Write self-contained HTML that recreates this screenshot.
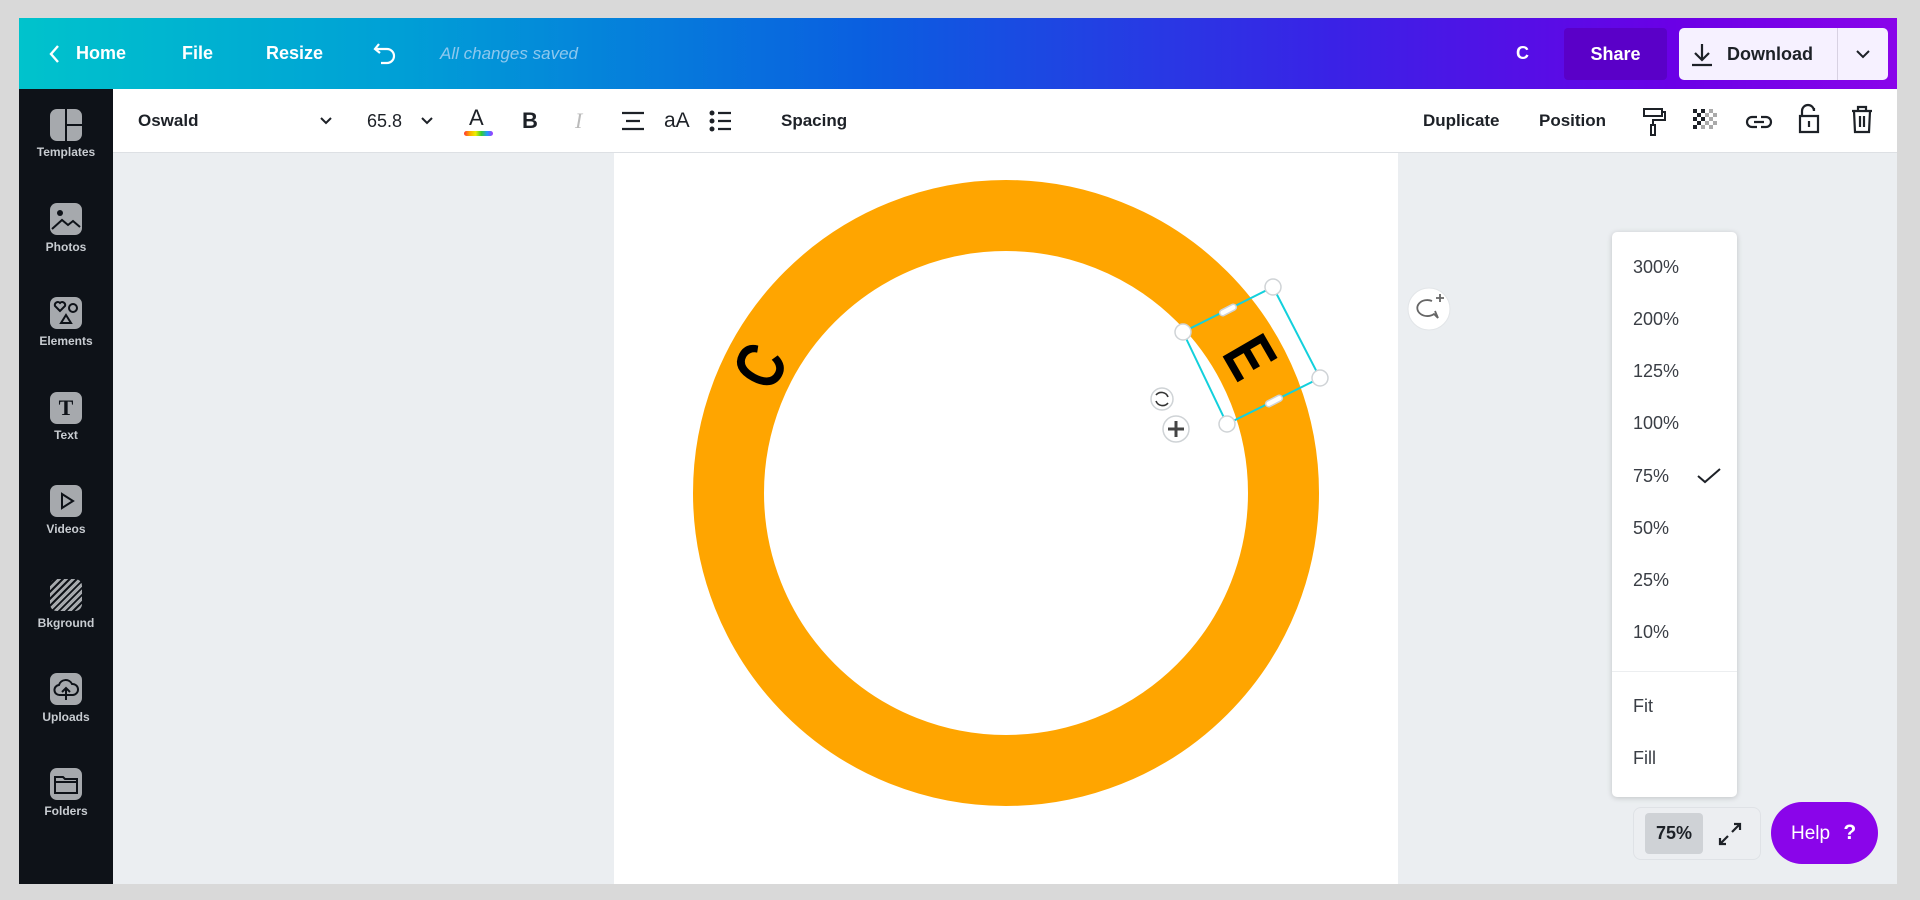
<!DOCTYPE html>
<html><head><meta charset="utf-8"><style>
*{margin:0;padding:0;box-sizing:border-box}
body{width:1920px;height:900px;background:#d9d9d9;position:relative;overflow:hidden;font-family:"Liberation Sans",sans-serif}
.abs{position:absolute}
#top{left:19px;top:18px;width:1878px;height:71px;background:linear-gradient(90deg,#00c3cc 0%,#00a0d6 20%,#0a5fe0 45%,#3a22e6 70%,#6a00e6 88%,#8a05ea 100%)}
.tt{position:absolute;top:0;line-height:71px;color:#fff;font-size:18px;font-weight:bold}
#side{left:19px;top:89px;width:94px;height:795px;background:#0e1218}
.si{position:absolute;left:0;width:94px;text-align:center;color:#c8ccd1;font-size:12px;font-weight:bold}
.ic{position:absolute;left:31px;width:32px;height:32px;background:#a6a9ad;border-radius:7px}
.sv{position:absolute;left:31px}
#tb{left:113px;top:89px;width:1784px;height:64px;background:#fff;border-bottom:1px solid #dde0e4}
.tl{position:absolute;top:0;line-height:64px;font-size:18px;color:#1d2127;font-weight:bold}
#cv{left:113px;top:153px;width:1784px;height:731px;background:#ebeef1}
#page{left:614px;top:153px;width:784px;height:731px;background:#fff}
#menu{left:1612px;top:232px;width:125px;height:565px;background:#fff;border-radius:5px;box-shadow:0 1px 6px rgba(0,0,0,.18)}
.mi{position:absolute;left:21px;font-size:18px;color:#3a3e45}
</style></head><body>
<div id="top" class="abs">
 <svg class="abs" style="left:29px;top:26px" width="14" height="20" viewBox="0 0 14 20"><path d="M10 2 L3 10 L10 18" stroke="#fff" stroke-width="2.4" fill="none"/></svg>
 <div class="tt" style="left:57px">Home</div>
 <div class="tt" style="left:163px">File</div>
 <div class="tt" style="left:247px">Resize</div>
 <svg class="abs" style="left:353px;top:22px" width="28" height="26" viewBox="0 0 28 26"><path d="M7 4 L3 9 L8 13 M3 9 H15 A7 7 0 0 1 15 23 H9" stroke="#fff" stroke-width="2.2" fill="none"/></svg>
 <div class="tt" style="left:421px;font-weight:normal;font-style:italic;color:#8ec8ee;font-size:17px">All changes saved</div>
 <div class="tt" style="left:1497px">C</div>
 <div class="abs" style="left:1545px;top:10px;width:103px;height:52px;background:#5a00c8;border-radius:4px;color:#fff;font-size:18px;font-weight:bold;text-align:center;line-height:52px">Share</div>
 <div class="abs" style="left:1660px;top:10px;width:209px;height:52px;background:#f6f1ff;border-radius:5px">
  <svg class="abs" style="left:10px;top:14px" width="26" height="26" viewBox="0 0 26 26"><path d="M13 2 V17 M6 11 L13 18 L20 11 M3 23 H23" stroke="#1d2127" stroke-width="2.2" fill="none"/></svg>
  <div class="abs" style="left:48px;top:0;line-height:52px;font-size:18px;font-weight:bold;color:#1d2127">Download</div>
  <div class="abs" style="left:158px;top:0;width:1px;height:52px;background:#d8d2e2"></div>
  <svg class="abs" style="left:176px;top:20px" width="16" height="12" viewBox="0 0 16 12"><path d="M2 3 L8 9 L14 3" stroke="#1d2127" stroke-width="2" fill="none"/></svg>
 </div>
</div>
<div id="side" class="abs">
 <div class="ic" style="top:20px"></div><div class="abs" style="left:46px;top:20px;width:2px;height:32px;background:#0e1218"></div><div class="abs" style="left:47px;top:35px;width:16px;height:2px;background:#0e1218"></div>
 <div class="si" style="top:56px">Templates</div>
 <div class="ic" style="top:114px"></div><svg class="sv" style="top:114px" width="32" height="32"><circle cx="10" cy="10" r="3" fill="#0e1218"/><path d="M2 26L12 17L18 22L23 18L30 24" stroke="#0e1218" stroke-width="2" fill="none"/></svg><div class="si" style="top:151px">Photos</div>
 <div class="ic" style="top:208px"></div><svg class="sv" style="top:208px" width="32" height="32" fill="none" stroke="#0e1218" stroke-width="2"><path d="M10 14L5 9A3 3 0 0 1 10 6A3 3 0 0 1 15 9Z"/><circle cx="23" cy="11" r="4"/><path d="M16 18L21 26H11Z"/></svg><div class="si" style="top:245px">Elements</div>
 <div class="ic" style="top:303px"></div><div class="abs" style="left:37px;top:308px;width:20px;height:22px;color:#0e1218;font:bold 22px 'Liberation Serif',serif;text-align:center;line-height:22px">T</div><div class="si" style="top:339px">Text</div>
 <div class="ic" style="top:396px"></div><svg class="abs" style="left:38px;top:402px" width="20" height="20"><path d="M5 3 L16 10 L5 17Z" stroke="#0e1218" stroke-width="2" fill="none"/></svg><div class="si" style="top:433px">Videos</div>
 <div class="ic" style="top:490px;background:repeating-linear-gradient(135deg,#a6a9ad 0 3px,#0e1218 3px 5px)"></div><div class="si" style="top:527px">Bkground</div>
 <div class="ic" style="top:584px"></div><svg class="sv" style="top:584px" width="32" height="32" fill="none" stroke="#0e1218" stroke-width="2"><path d="M10 22A5 5 0 0 1 9 12A7 7 0 0 1 22 11A5 5 0 0 1 23 22Z M16 27V15M12 19L16 15L20 19"/></svg><div class="si" style="top:621px">Uploads</div>
 <div class="ic" style="top:679px"></div><svg class="sv" style="top:679px" width="32" height="32" fill="none" stroke="#0e1218" stroke-width="2"><path d="M5 9H13L15 11H27V25H5Z M5 14H27"/></svg><div class="si" style="top:715px">Folders</div>
</div>
<div id="tb" class="abs">
 <div class="tl" style="left:25px;font-size:17px">Oswald</div>
 <svg class="abs" style="left:206px;top:27px" width="14" height="10"><path d="M2 2 L7 7 L12 2" stroke="#1d2127" stroke-width="2" fill="none"/></svg>
 <div class="tl" style="left:254px;font-weight:normal">65.8</div>
 <svg class="abs" style="left:307px;top:27px" width="14" height="10"><path d="M2 2 L7 7 L12 2" stroke="#1d2127" stroke-width="2" fill="none"/></svg>
 <div class="tl" style="left:356px;font-weight:normal;font-size:22px;line-height:58px">A</div>
 <div class="abs" style="left:351px;top:42px;width:29px;height:5px;border-radius:3px;background:linear-gradient(90deg,#f33,#fa0,#ee0,#3c3,#29f,#a3f)"></div>
 <div class="tl" style="left:409px;font-size:22px">B</div>
 <div class="tl" style="left:462px;font-size:22px;font-weight:normal;font-style:italic;color:#bbb;font-family:'Liberation Serif',serif">I</div>
 <svg class="abs" style="left:508px;top:21px" width="24" height="22"><path d="M1 3H23M5 11H19M1 19H23" stroke="#1d2127" stroke-width="2.2"/></svg>
 <div class="tl" style="left:551px;font-weight:normal;font-size:21px">aA</div>
 <svg class="abs" style="left:596px;top:20px" width="24" height="24"><circle cx="3" cy="4" r="2.5" fill="#1d2127"/><circle cx="3" cy="12" r="2.5" fill="#1d2127"/><circle cx="3" cy="20" r="2.5" fill="#1d2127"/><path d="M9 4H22M9 12H22M9 20H22" stroke="#1d2127" stroke-width="2.2"/></svg>
 <div class="tl" style="left:668px;font-size:17px">Spacing</div>
 <div class="tl" style="left:1310px;font-size:17px">Duplicate</div>
 <div class="tl" style="left:1426px;font-size:17px">Position</div>
 <svg class="abs" style="left:1528px;top:18px" width="26" height="30"><path d="M3 2H21V9H3Z M21 5H24V13H12V18 M10 18H14V28H10Z" stroke="#1d2127" stroke-width="2" fill="none"/></svg>
 <svg class="abs" style="left:1580px;top:20px" width="24" height="24"><g fill="#1d2127"><rect x="0" y="0" width="4" height="4"/><rect x="8" y="0" width="4" height="4"/><rect x="4" y="4" width="4" height="4"/><rect x="0" y="8" width="4" height="4"/><rect x="8" y="8" width="4" height="4"/><rect x="4" y="12" width="4" height="4"/><rect x="0" y="16" width="4" height="4"/></g><g fill="#aaa"><rect x="12" y="4" width="4" height="4"/><rect x="16" y="0" width="4" height="4"/><rect x="12" y="12" width="4" height="4"/><rect x="16" y="8" width="4" height="4"/><rect x="8" y="16" width="4" height="4"/><rect x="16" y="16" width="4" height="4"/><rect x="20" y="12" width="4" height="4"/><rect x="20" y="4" width="4" height="4"/></g></svg>
 <svg class="abs" style="left:1632px;top:22px" width="28" height="22"><path d="M12 6H7A5 5 0 0 0 7 16H12 M16 6H21A5 5 0 0 1 21 16H16 M9 11H19" stroke="#1d2127" stroke-width="2.2" fill="none"/></svg>
 <svg class="abs" style="left:1684px;top:14px" width="24" height="32"><path d="M5 12V8A6 6 0 0 1 17 8V5 M3 13H21V29H3Z M12 18V24" stroke="#1d2127" stroke-width="2.2" fill="none"/></svg>
 <svg class="abs" style="left:1737px;top:16px" width="24" height="30"><path d="M2 6H22 M8 6V2H16V6 M4 6L5 27H19L20 6 M10 11V22 M14 11V22" stroke="#1d2127" stroke-width="2.2" fill="none"/></svg>
</div>
<div id="cv" class="abs"></div>
<div id="page" class="abs"></div>
<svg class="abs" style="left:0;top:0" width="1920" height="900">
 <circle cx="1006" cy="493" r="277.5" fill="none" stroke="#ffa500" stroke-width="71"/>
 <text x="0" y="0" transform="translate(760,366) rotate(-62) scale(0.78,1)" text-anchor="middle" dominant-baseline="central" font-family="Liberation Sans,sans-serif" font-weight="bold" font-size="68" fill="#000">C</text>
 <text x="0" y="0" transform="translate(1250,357) rotate(60) scale(0.78,1)" text-anchor="middle" dominant-baseline="central" font-family="Liberation Sans,sans-serif" font-weight="bold" font-size="68" fill="#000">E</text>
 <polygon points="1183,332 1273,287 1320,378 1227,424" fill="none" stroke="#13d0dc" stroke-width="2"/>
 <g fill="#fff" stroke="#cfd3d6" stroke-width="1.5">
  <circle cx="1183" cy="332" r="8"/><circle cx="1273" cy="287" r="8"/><circle cx="1320" cy="378" r="8"/><circle cx="1227" cy="424" r="8"/>
  <rect x="-9" y="-3" width="18" height="6" rx="3" transform="translate(1228,310) rotate(-27)"/>
  <rect x="-9" y="-3" width="18" height="6" rx="3" transform="translate(1274,401) rotate(-27)"/>
  <circle cx="1162" cy="399" r="11"/><circle cx="1176" cy="429" r="13"/>
 </g>
 <path d="M1156 395 A7 7 0 0 1 1168 397 M1168 403 A7 7 0 0 1 1156 401" stroke="#333" stroke-width="1.6" fill="none"/>
 <path d="M1176 421V437M1168 429H1184" stroke="#444" stroke-width="3"/>
 <circle cx="1429" cy="309" r="21" fill="#fff" stroke="#e2e5e8"/>
 <path d="M1432 301A10 8 0 1 0 1434 314L1438 318L1435 311" stroke="#666" stroke-width="1.8" fill="none"/>
 <path d="M1436 298H1444M1440 294V302" stroke="#666" stroke-width="1.8"/>
</svg>
<div id="menu" class="abs">
 <div class="mi" style="top:25px">300%</div>
 <div class="mi" style="top:77px">200%</div>
 <div class="mi" style="top:129px">125%</div>
 <div class="mi" style="top:181px">100%</div>
 <div class="mi" style="top:234px">75%</div>
 <svg class="abs" style="left:84px;top:234px" width="26" height="20"><path d="M2 10L9 16L24 3" stroke="#1d2127" stroke-width="2" fill="none"/></svg>
 <div class="mi" style="top:286px">50%</div>
 <div class="mi" style="top:338px">25%</div>
 <div class="mi" style="top:390px">10%</div>
 <div class="abs" style="left:0;top:439px;width:125px;height:1px;background:#eceef0"></div>
 <div class="mi" style="top:464px">Fit</div>
 <div class="mi" style="top:516px">Fill</div>
</div>
<div class="abs" style="left:1633px;top:807px;width:128px;height:53px;border:1px solid #dfe2e6;border-radius:8px;background:#eceef1">
 <div class="abs" style="left:11px;top:5px;width:58px;height:41px;background:#cfd2d6;border-radius:4px;text-align:center;line-height:41px;font-size:18px;font-weight:bold;color:#1d2127">75%</div>
 <svg class="abs" style="left:84px;top:14px" width="26" height="24"><path d="M14 10L22 2M16 2H22V8M10 14L2 22M2 16V22H8" stroke="#1d2127" stroke-width="2.2" fill="none"/></svg>
</div>
<div class="abs" style="left:1771px;top:802px;width:107px;height:62px;background:#8a05ea;border-radius:31px;color:#fff;font-size:19px;line-height:62px;padding-left:20px">Help <b style="margin-left:8px;font-size:21px">?</b></div>
</body></html>
